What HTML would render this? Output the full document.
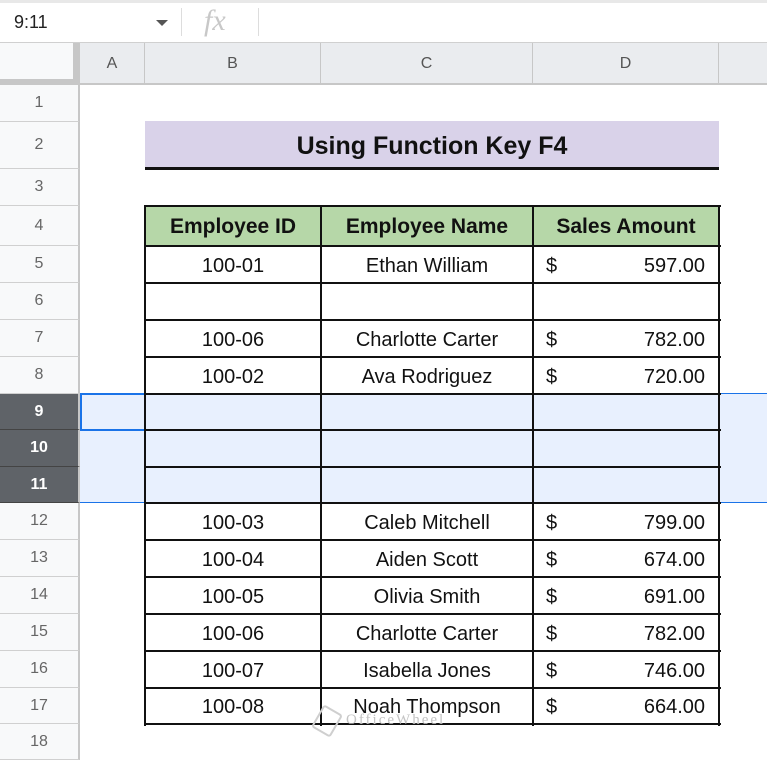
<!DOCTYPE html>
<html><head><meta charset="utf-8"><style>
*{margin:0;padding:0;box-sizing:border-box}
body{width:767px;height:762px;overflow:hidden;background:#fff;font-family:"Liberation Sans",Arial,sans-serif;position:relative}
.a{position:absolute}
.ch{position:absolute;top:43px;height:42px;background:#eaecef;border-right:1px solid #c7c7c7;border-bottom:2px solid #c7c7c7;color:#555;font-size:16px;text-align:center;line-height:42px}
.rh{position:absolute;left:0;width:80px;background:#f8f9fa;border-right:2px solid #c7c7c7;border-bottom:1px solid #d0d0d0;color:#666;font-size:16px;text-align:center}
.rh.s{background:#5f6368;color:#fff;font-weight:bold;border-bottom:1px solid #444}
.r{position:absolute;left:145px;width:574px;display:flex;font-size:20px;color:#111;align-items:center;padding-top:3px}
.r div{text-align:center}
.c1{width:176px}.c2{width:212px}.c3{width:186px;text-align:left!important;padding-left:13px;display:flex;justify-content:space-between;padding-right:14px}
.h{background:#b6d7a8;font-weight:bold;font-size:21px;padding-top:2px}
.hl{position:absolute;left:144px;width:577px;height:2px;background:#111}
.vl{position:absolute;top:205px;height:521px;width:2px;background:#111}
</style></head><body>
<div class="a" style="left:0;top:0;width:767px;height:3px;background:#e8e8e8"></div>
<div class="a" style="left:14px;top:12px;font-size:18px;color:#222">9:11</div>
<div class="a" style="left:156px;top:20px;width:0;height:0;border-left:6px solid transparent;border-right:6px solid transparent;border-top:6px solid #555"></div>
<div class="a" style="left:181px;top:8px;width:1px;height:28px;background:#ddd"></div>
<div class="a" style="left:204px;top:4px;font-family:'Liberation Serif',serif;font-style:italic;font-size:30px;color:#c8c8c8">fx</div>
<div class="a" style="left:258px;top:8px;width:1px;height:28px;background:#ddd"></div>
<div class="a" style="left:0;top:42px;width:767px;height:1px;background:#d0d0d0"></div>

<div class="ch" style="left:0;width:80px;background:#f8f9fa;border-right:7px solid #c7c7c7;border-bottom:6px solid #c7c7c7"></div>
<div class="ch" style="left:80px;width:65px">A</div>
<div class="ch" style="left:145px;width:176px">B</div>
<div class="ch" style="left:321px;width:212px">C</div>
<div class="ch" style="left:533px;width:186px">D</div>
<div class="ch" style="left:719px;width:48px;border-right:none"></div>

<div class="rh" style="top:85px;height:37px;line-height:36px">1</div>
<div class="rh" style="top:122px;height:47px;line-height:46px">2</div>
<div class="rh" style="top:169px;height:37px;line-height:36px">3</div>
<div class="rh" style="top:206px;height:40px;line-height:39px">4</div>
<div class="rh" style="top:246px;height:37px;line-height:36px">5</div>
<div class="rh" style="top:283px;height:37px;line-height:36px">6</div>
<div class="rh" style="top:320px;height:37px;line-height:36px">7</div>
<div class="rh" style="top:357px;height:37px;line-height:36px">8</div>
<div class="rh s" style="top:394px;height:36px;line-height:35px">9</div>
<div class="rh s" style="top:430px;height:37px;line-height:36px">10</div>
<div class="rh s" style="top:467px;height:36px;line-height:35px">11</div>
<div class="rh" style="top:503px;height:37px;line-height:36px">12</div>
<div class="rh" style="top:540px;height:37px;line-height:36px">13</div>
<div class="rh" style="top:577px;height:37px;line-height:36px">14</div>
<div class="rh" style="top:614px;height:37px;line-height:36px">15</div>
<div class="rh" style="top:651px;height:37px;line-height:36px">16</div>
<div class="rh" style="top:688px;height:36px;line-height:35px">17</div>
<div class="rh" style="top:724px;height:36px;line-height:35px">18</div>

<div class="a" style="left:80px;top:393px;width:687px;height:110px;background:#e8f0fe;border-top:1px solid #1a73e8;border-bottom:1px solid #1a73e8"></div>
<div class="a" style="left:80px;top:393px;width:66px;height:38px;border:2px solid #1a73e8"></div>

<div class="a" style="left:145px;top:121px;width:574px;height:46px;background:#d9d2e9;text-align:center;line-height:50px;font-weight:bold;font-size:25px;color:#111">Using Function Key F4</div>
<div class="a" style="left:145px;top:167px;width:574px;height:3px;background:#111"></div>

<div class="r h" style="top:206px;height:40px"><div class="c1">Employee ID</div><div class="c2">Employee Name</div><div class="c1" style="width:186px">Sales Amount</div></div>
<div class="r" style="top:246px;height:37px"><div class="c1">100-01</div><div class="c2">Ethan William</div><div class="c3"><span>$</span><span>597.00</span></div></div>
<div class="r" style="top:320px;height:37px"><div class="c1">100-06</div><div class="c2">Charlotte Carter</div><div class="c3"><span>$</span><span>782.00</span></div></div>
<div class="r" style="top:357px;height:37px"><div class="c1">100-02</div><div class="c2">Ava Rodriguez</div><div class="c3"><span>$</span><span>720.00</span></div></div>
<div class="r" style="top:503px;height:37px"><div class="c1">100-03</div><div class="c2">Caleb Mitchell</div><div class="c3"><span>$</span><span>799.00</span></div></div>
<div class="r" style="top:540px;height:37px"><div class="c1">100-04</div><div class="c2">Aiden Scott</div><div class="c3"><span>$</span><span>674.00</span></div></div>
<div class="r" style="top:577px;height:37px"><div class="c1">100-05</div><div class="c2">Olivia Smith</div><div class="c3"><span>$</span><span>691.00</span></div></div>
<div class="r" style="top:614px;height:37px"><div class="c1">100-06</div><div class="c2">Charlotte Carter</div><div class="c3"><span>$</span><span>782.00</span></div></div>
<div class="r" style="top:651px;height:37px"><div class="c1">100-07</div><div class="c2">Isabella Jones</div><div class="c3"><span>$</span><span>746.00</span></div></div>
<div class="r" style="top:688px;height:36px"><div class="c1">100-08</div><div class="c2">Noah Thompson</div><div class="c3"><span>$</span><span>664.00</span></div></div>

<div class="hl" style="top:205px"></div>
<div class="hl" style="top:245px"></div>
<div class="hl" style="top:282px"></div>
<div class="hl" style="top:319px"></div>
<div class="hl" style="top:356px"></div>
<div class="hl" style="top:393px"></div>
<div class="hl" style="top:429px"></div>
<div class="hl" style="top:466px"></div>
<div class="hl" style="top:502px"></div>
<div class="hl" style="top:539px"></div>
<div class="hl" style="top:576px"></div>
<div class="hl" style="top:613px"></div>
<div class="hl" style="top:650px"></div>
<div class="hl" style="top:687px"></div>
<div class="hl" style="top:723px"></div>
<div class="vl" style="left:144px"></div>
<div class="vl" style="left:320px"></div>
<div class="vl" style="left:532px"></div>
<div class="vl" style="left:718px"></div>

<div class="a" style="left:346px;top:712px;font-family:'Liberation Serif',serif;font-size:15px;letter-spacing:2px;color:#c4c4c4">OfficeWheel</div>
<div class="a" style="left:316px;top:708px;width:22px;height:26px;border:2px solid #cfcfcf;border-radius:3px;transform:rotate(30deg)"></div>
</body></html>
